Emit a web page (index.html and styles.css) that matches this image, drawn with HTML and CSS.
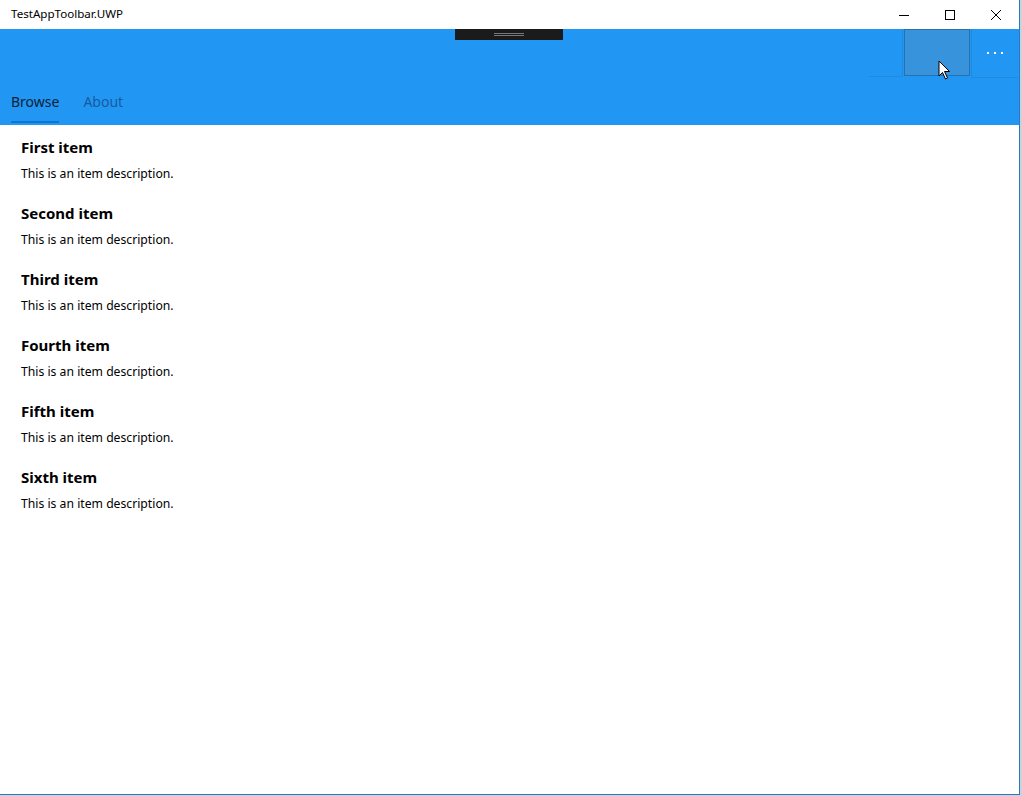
FILE: index.html
```html
<!DOCTYPE html>
<html>
<head>
<meta charset="utf-8">
<link rel="stylesheet" href="styles.css">
</head>
<body>
<div class="window">
  <div class="titlebar">
    <span class="title">TestAppToolbar.UWP</span>
    <div class="caption">
      <div class="cbtn"><svg width="10" height="10" viewBox="0 0 10 10"><path d="M0 5.5H10" stroke="#000" stroke-width="1"/></svg></div>
      <div class="cbtn"><svg width="10" height="10" viewBox="0 0 10 10"><rect x="0.5" y="0.5" width="9" height="9" fill="none" stroke="#000" stroke-width="1"/></svg></div>
      <div class="cbtn"><svg width="10" height="10" viewBox="0 0 10 10"><path d="M0 0L10 10M10 0L0 10" stroke="#000" stroke-width="1"/></svg></div>
    </div>
  </div>
  <div class="header">
    <div class="toolbar">
      <div class="handle"><span class="grip"></span></div>
      <div class="tools">
        <div class="tool sep"></div>
        <div class="tool hover">
          <svg class="cursor" width="14" height="20" viewBox="0 0 14 20"><path d="M1 1V16L4.5 12.5L7.5 19L9.5 18L6.5 11.5H11.5Z" fill="#fff" stroke="#000" stroke-width="1"/></svg>
        </div>
        <div class="tool more"><span class="dot"></span><span class="dot"></span><span class="dot"></span></div>
      </div>
    </div>
    <div class="tabs">
      <div class="tab active">Browse</div>
      <div class="tab">About</div>
    </div>
  </div>
  <div class="list">
    <div class="item"><div class="name">First item</div><div class="desc">This is an item description.</div></div>
    <div class="item"><div class="name">Second item</div><div class="desc">This is an item description.</div></div>
    <div class="item"><div class="name">Third item</div><div class="desc">This is an item description.</div></div>
    <div class="item"><div class="name">Fourth item</div><div class="desc">This is an item description.</div></div>
    <div class="item"><div class="name">Fifth item</div><div class="desc">This is an item description.</div></div>
    <div class="item"><div class="name">Sixth item</div><div class="desc">This is an item description.</div></div>
  </div>
</div>
</body>
</html>
```

FILE: styles.css
```css
html, body {
  margin: 0;
  padding: 0;
  background: #c9d3dc;
  width: 1022px;
  height: 796px;
  overflow: hidden;
  font-family: "Noto Sans", "Open Sans", sans-serif;
}
.window {
  width: 1019px;
  height: 794px;
  background: #fff;
  border-right: 1px solid #2b78c2;
  border-bottom: 1px solid #2b78c2;
  display: flex;
  flex-direction: column;
}
.titlebar {
  height: 29px;
  display: flex;
  align-items: center;
  justify-content: space-between;
  background: #fff;
}
.title {
  font-size: 11.6px;
  color: #000;
  padding-left: 11px;
  padding-bottom: 3px;
}
.caption {
  display: flex;
  height: 29px;
}
.cbtn {
  width: 46px;
  height: 29px;
  display: flex;
  align-items: center;
  justify-content: center;
}
.header {
  background: #2196f3;
  height: 96px;
  display: flex;
  flex-direction: column;
}
.toolbar {
  height: 48px;
  display: flex;
  justify-content: flex-end;
  position: relative;
}
.handle {
  position: absolute;
  left: 455px;
  top: 0;
  width: 108px;
  height: 11px;
  background: #1b1b1b;
  display: flex;
  align-items: center;
  justify-content: center;
}
.grip {
  width: 30px;
  height: 1px;
  border-top: 1px solid #777;
  border-bottom: 1px solid #777;
}
.tools {
  display: flex;
  align-items: stretch;
  height: 48px;
  padding-right: 1px;
}
.tool {
  height: 47px;
  border-bottom: 1px solid #1f8ae0;
}
.sep {
  width: 33px;
  margin-right: 1px;
  border-right: 1px solid #1f8ae0;
}
.hover {
  width: 64px;
  height: 45px;
  background: #3893dd;
  border: 1px solid #2a70ad;
  position: relative;
  margin-right: 1px;
}
.cursor {
  position: absolute;
  left: 33px;
  top: 30px;
}
.more {
  width: 46px;
  border-left: 1px solid #1f8ae0;
  display: flex;
  align-items: center;
  justify-content: center;
  gap: 5px;
  padding-bottom: 1px;
}
.dot {
  width: 2px;
  height: 2px;
  background: #fff;
}
.tabs {
  height: 48px;
  display: flex;
  padding-left: 11px;
  gap: 24px;
}
.tab {
  font-size: 14px;
  color: rgba(10, 40, 80, 0.55);
  line-height: 48px;
  height: 48px;
  padding-top: 1px;
  box-sizing: border-box;
  position: relative;
}
.tab.active {
  color: #0d2235;
}
.tab.active::after {
  content: "";
  position: absolute;
  left: 0;
  right: 0;
  bottom: 2px;
  height: 2px;
  background: #0b76d0;
}
.list {
  padding: 12px 21px 0;
  display: flex;
  flex-direction: column;
}
.item {
  height: 66px;
  display: flex;
  flex-direction: column;
}
.name {
  font-size: 15px;
  font-weight: bold;
  color: #000;
  line-height: 20px;
}
.desc {
  font-size: 12.2px;
  color: #000;
  line-height: 16px;
  margin-top: 9px;
}
```
